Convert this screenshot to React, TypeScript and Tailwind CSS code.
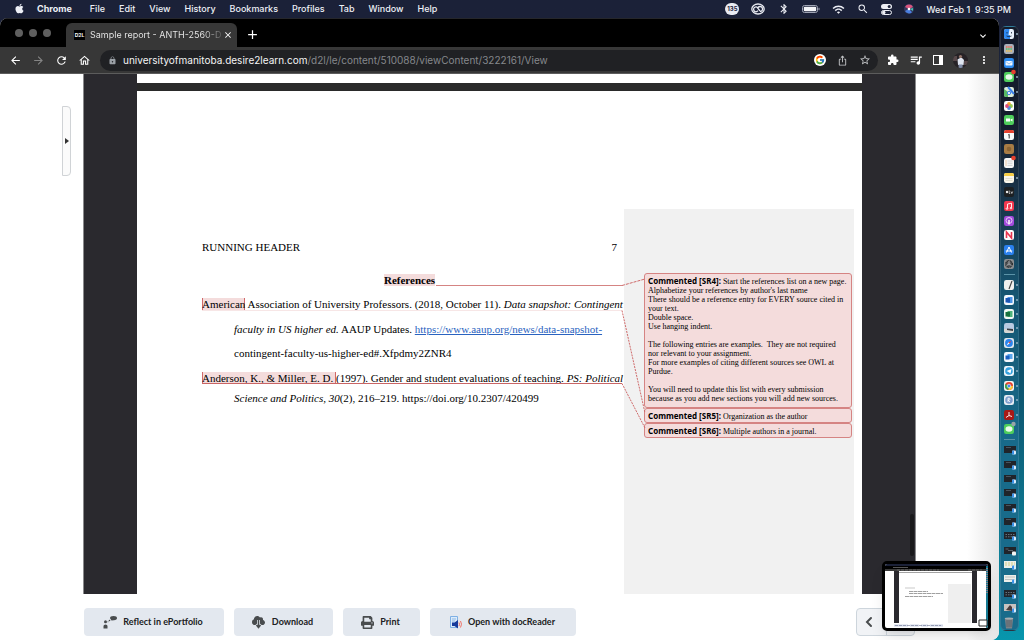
import type { ReactNode } from 'react'
import clsx from 'clsx'
import { FaApple, FaCloud, FaPrint } from 'react-icons/fa'
import { FcGoogle } from 'react-icons/fc'
import {
  MdAdd,
  MdArrowBack,
  MdArrowForward,
  MdBluetooth,
  MdClose,
  MdExpandMore,
  MdExtension,
  MdIosShare,
  MdLock,
  MdMoreVert,
  MdOutlineHome,
  MdQueueMusic,
  MdRefresh,
  MdSearch,
  MdStarBorder,
  MdWifi,
} from 'react-icons/md'

const MENUS = ['File', 'Edit', 'View', 'History', 'Bookmarks', 'Profiles', 'Tab', 'Window', 'Help']

function CreativeCloud() {
  return (
    <svg viewBox="0 0 14 12" className="w-[14px] h-3" fill="none" stroke="#e9ebf2" strokeWidth="1.3">
      <ellipse cx="7" cy="6" rx="6.2" ry="5" />
      <path d="M7 7.8 5.6 8.7A2.4 2.4 0 1 1 6 4.2L9 8M7 4.6A2.5 2.5 0 1 1 9 8.5" />
    </svg>
  )
}

function MenuBar() {
  return (
    <header className="h-[18px] shrink-0 flex items-center justify-between pl-[14px] pr-[13px] text-[9px] leading-none font-medium text-[#eef0f6]">
      <nav className="flex items-center gap-[14px] pb-px">
        <button aria-label="Apple menu" className="mr-[-2px]">
          <FaApple className="w-[11px] h-[11px]" />
        </button>
        <button className="font-bold mr-1">Chrome</button>
        {MENUS.map((m) => (
          <button key={m}>{m}</button>
        ))}
      </nav>
      <div className="flex items-center">
        <span className="relative w-[14px] h-3 rounded-full bg-[#e9ebf2] text-[#1b2138] text-[6px] font-bold flex items-center justify-center mr-3">
          135
        </span>
        <CreativeCloud />
        <MdBluetooth className="w-3 h-3 ml-[13px]" />
        <svg viewBox="0 0 18 8" className="w-[18px] h-2 ml-3" fill="none">
          <rect x=".5" y=".5" width="15" height="7" rx="2" stroke="#a0a5b5" />
          <rect x="1.8" y="1.8" width="12.4" height="4.4" rx="1" fill="#f4f5f8" />
          <path d="M17 2.8v2.4" stroke="#a0a5b5" />
        </svg>
        <MdWifi className="w-[13px] h-[13px] ml-3" />
        <MdSearch className="w-3 h-3 ml-3" />
        <svg viewBox="0 0 11 11" className="w-[11px] h-[11px] ml-3">
          <rect width="11" height="5" rx="2.5" fill="#eef0f6" />
          <circle cx="8.2" cy="2.5" r="1.5" fill="#1b2138" />
          <rect x=".5" y="6.5" width="10" height="4" rx="2" fill="none" stroke="#eef0f6" />
          <circle cx="2.8" cy="8.5" r="1.7" fill="#eef0f6" />
        </svg>
        <svg viewBox="0 0 10 10" className="w-[10px] h-[10px] ml-3">
          <circle cx="5" cy="5" r="5" fill="#33395e" />
          <path d="M1 3a4.5 4.5 0 0 1 8 0L5 5z" fill="#d9557e" />
          <path d="M1 7a4.5 4.5 0 0 0 7 1.2L5 5z" fill="#4a7fe0" />
          <path d="M6 5l3-1v3z" fill="#45c4b0" />
          <circle cx="5" cy="5" r="1.3" fill="#fff" />
        </svg>
        <span className="ml-3 whitespace-pre">Wed Feb 1  9:35 PM</span>
      </div>
    </header>
  )
}

function TabStrip() {
  return (
    <div className="h-[29px] shrink-0 bg-black border-t border-[#26272b] flex items-end pl-[15px] pr-[10px]">
      <div className="flex gap-[6px] self-center">
        <span className="w-2 h-2 rounded-full bg-[#5f5f5f]" />
        <span className="w-2 h-2 rounded-full bg-[#5f5f5f]" />
        <span className="w-2 h-2 rounded-full bg-[#5f5f5f]" />
      </div>
      <div className="ml-[15px] w-[171px] h-6 rounded-t-md bg-[#373737] flex items-center pl-2 pr-1">
        <span className="w-[11px] h-[10px] bg-black text-white text-[5px] font-bold leading-[10px] text-center">D2L</span>
        <span className="ml-[5px] flex-1 whitespace-nowrap text-[9px] bg-linear-to-r from-[#f0f0f0] from-85% to-[#505050] bg-clip-text text-transparent">
          Sample report - ANTH-2560-D
        </span>
        <button aria-label="Close tab" className="text-white">
          <MdClose className="w-[10px] h-[10px]" />
        </button>
      </div>
      <button aria-label="New tab" className="ml-2 mb-[5px] text-white">
        <MdAdd className="w-[15px] h-[15px]" />
      </button>
      <button aria-label="Search tabs" className="ml-auto mb-[5px] text-white">
        <MdExpandMore className="w-3 h-3" />
      </button>
    </div>
  )
}

function Toolbar() {
  return (
    <div className="h-[27px] shrink-0 bg-[#373737] border-b border-[#5c5c5c] flex items-center pl-[9px] pr-[9px] text-white">
      <div className="flex items-center gap-[10px]">
        <button aria-label="Back"><MdArrowBack className="w-[13px] h-[13px]" /></button>
        <button aria-label="Forward" className="text-[#858585]"><MdArrowForward className="w-[13px] h-[13px]" /></button>
        <button aria-label="Reload"><MdRefresh className="w-[13px] h-[13px]" /></button>
        <button aria-label="Home"><MdOutlineHome className="w-[13px] h-[13px]" /></button>
      </div>
      <div className="ml-[9px] flex-1 h-[21px] rounded-full bg-[#202124] flex items-center pl-2 pr-[7px]">
        <MdLock className="w-[9px] h-[9px] text-[#9aa0a6]" />
        <span className="ml-[6px] text-[10px] text-[#85888c]">
          <span className="text-[#f4f4f4]">universityofmanitoba.desire2learn.com</span>/d2l/le/content/510088/viewContent/3222161/View
        </span>
        <div className="ml-auto flex items-center gap-[11px] text-[#c4c6c9]">
          <span className="w-3 h-3 rounded-full bg-white flex items-center justify-center">
            <FcGoogle className="w-[10px] h-[10px]" />
          </span>
          <button aria-label="Share"><MdIosShare className="w-[11px] h-[11px]" /></button>
          <button aria-label="Bookmark"><MdStarBorder className="w-3 h-3" /></button>
        </div>
      </div>
      <div className="ml-[9px] flex items-center gap-[10px]">
        <button aria-label="Extensions"><MdExtension className="w-3 h-3" /></button>
        <button aria-label="Media"><MdQueueMusic className="w-[14px] h-[14px]" /></button>
        <button aria-label="Side panel" className="w-[10px] h-[10px] border border-white border-r-4" />
        <button aria-label="Profile" className="w-[15px] h-[15px] rounded-full overflow-hidden">
          <svg viewBox="0 0 15 15">
            <rect width="15" height="15" fill="#262226" />
            <path d="M0 3h4v5H0zM11 8h4v4h-4z" fill="#57484a" />
            <circle cx="7.5" cy="3.6" r="1.6" fill="#94766b" />
            <path d="M4.5 6.5 7 5h2l2 2-.5 5H5z" fill="#dfe5f0" />
            <path d="M5.6 11.5h4V15h-4z" fill="#7f8ba6" />
          </svg>
        </button>
        <button aria-label="Chrome menu"><MdMoreVert className="w-3 h-3" /></button>
      </div>
    </div>
  )
}

function Mark({ children }: { children: ReactNode }) {
  return (
    <mark className="bg-[#f4dcdc] text-black shadow-[inset_1px_0_#d0696a,inset_-1px_0_#d0696a]">{children}</mark>
  )
}

// Lines that tie each highlighted passage to its balloon in the margin
function Connectors() {
  return (
    <svg className="absolute left-0 top-0 w-[520px] h-[360px] pointer-events-none" viewBox="0 0 520 360" fill="none">
      <path d="M299 194.500H485" stroke="#d58483" />
      <path d="M485 194.500 508 188" stroke="#cf6a6a" strokeDasharray="3 1" />
      <path d="M65 219.500H485" stroke="#f7e6e6" />
      <path d="M485 219.500 508 322" stroke="#cf6a6a" strokeDasharray="2 1" />
      <path d="M65 292.500H485" stroke="#c96565" />
      <path d="M485 292.500 508 337" stroke="#cf6a6a" strokeDasharray="2 1" />
    </svg>
  )
}

function Comment({ tag, children }: { tag: string; children: ReactNode }) {
  return (
    <section className="bg-[#f4dcdc] border border-[#d58483] rounded-[3px] pl-[3px] pt-[2px] pb-px first:pb-1 leading-[9px] whitespace-pre">
      <b className="inline-block leading-[10px] font-['Noto_Sans','Open_Sans',sans-serif]">Commented [{tag}]:</b> {children}
    </section>
  )
}

const SR4_TEXT = `Start the references list on a new page.
Alphabetize your references by author's last name
There should be a reference entry for EVERY source cited in
your text.
Double space.
Use hanging indent.

The following entries are examples.  They are not required
nor relevant to your assignment.
For more examples of citing different sources see OWL at
Purdue.

You will need to update this list with every submission
because as you add new sections you will add new sources.`

function PaperPage() {
  return (
    <article className="relative flex-1 bg-white flex pr-2 text-black font-['Liberation_Serif','Times_New_Roman',serif]">
      <div className="flex-1 pt-[150px] pl-[65px] text-[11px] whitespace-nowrap">
        <div className="flex justify-between pr-[7px] leading-3">
          <span>RUNNING HEADER</span>
          <span>7</span>
        </div>
        <h1 className="mt-[15px] pr-[7px] leading-6 font-bold text-center">
          <mark className="bg-[#f4dcdc] text-black">References</mark>
        </h1>
        <p className="leading-6">
          <Mark>American</Mark> Association of University Professors. (2018, October 11). <i>Data snapshot: Contingent</i>
        </p>
        <p className="mt-px pl-8 leading-6">
          <i>faculty in US higher ed.</i> AAUP Updates.{' '}
          <a href="#aaup" className="text-[#2a63c0] underline">https://www.aaup.org/news/data-snapshot-</a>
          <br />
          contingent-faculty-us-higher-ed#.Xfpdmy2ZNR4
        </p>
        <p className="mt-px leading-6">
          <Mark>Anderson, K., &amp; Miller, E. D. </Mark>(1997). Gender and student evaluations of teaching. <i>PS: Political</i>
        </p>
        <p className="pl-8 leading-4">
          <i>Science and Politics, 30</i>(2), 216–219. https://doi.org/10.2307/420499
        </p>
      </div>
      <aside className="mt-[118px] w-[230px] shrink-0 bg-[#f1f1f1] pt-16 pl-5 pr-[2px] flex flex-col text-[8px]">
        <Comment tag="SR4">{SR4_TEXT}</Comment>
        <Comment tag="SR5">Organization as the author</Comment>
        <Comment tag="SR6">Multiple authors in a journal.</Comment>
      </aside>
      <Connectors />
    </article>
  )
}

function ReflectIcon() {
  return (
    <svg viewBox="0 0 14 14" className="w-[14px] h-[14px]" fill="#494c4e">
      <circle cx="2.5" cy="6.8" r="1.5" />
      <path d="M.5 11q0-1.500 2-1.500t2 1.500v2.500h-4zM7 3.200Q7 1 10.500 1T14 3t-3 2.200L8.500 5.500z" />
      <circle cx="6.500" cy="5.500" r=".8" />
      <circle cx="5" cy="6.800" r=".5" />
    </svg>
  )
}

function DownloadIcon() {
  return (
    <span className="relative w-[14px] h-[14px] text-[#494c4e]">
      <FaCloud className="w-[13px] h-[11px]" />
      <svg viewBox="0 0 14 14" className="absolute inset-0" fill="none">
        <path d="M6.500 5v7M4 9.500l2.500 3 2.500-3" stroke="#e3e8ef" strokeWidth="3" />
        <path d="M6.500 5v7M4.500 10l2 2.500 2-2.500" stroke="#494c4e" strokeWidth="1.500" />
      </svg>
    </span>
  )
}

function DocReaderIcon() {
  return (
    <svg viewBox="0 0 13 13" className="w-[13px] h-[13px]" fill="none">
      <path d="M1.500.500h7v11h-7z" fill="#dcecfb" stroke="#7fb0e4" />
      <path d="M3 3h4M3 5h3" stroke="#8fb7e3" />
      <path d="M3 6.500h2.500L9 4v8.500L5.500 10H3z" fill="#173b9c" />
      <path d="M10 6.500q1 1.800 0 3.600M11.500 5q2 3.200 0 6.500" stroke="#ef7066" />
    </svg>
  )
}

function ActionButton({ icon, label, className }: { icon: ReactNode; label: string; className: string }) {
  return (
    <button className={clsx('h-7 rounded bg-[#e3e8ef] flex items-center justify-center gap-[6px] pr-[2px] text-[9px] font-bold text-[#202122]', className)}>
      {icon}
      {label}
    </button>
  )
}

function ActionBar() {
  return (
    <footer className="h-[46px] shrink-0 flex items-start pt-[14px] mx-[84px] font-['Lato',sans-serif]">
      <div className="flex gap-[10px]">
        <ActionButton className="w-[140px]" icon={<ReflectIcon />} label="Reflect in ePortfolio" />
        <ActionButton className="w-[99px]" icon={<DownloadIcon />} label="Download" />
        <ActionButton className="w-[77px]" icon={<FaPrint className="w-[13px] h-[13px] text-[#494c4e]" />} label="Print" />
        <ActionButton className="w-[146px]" icon={<DocReaderIcon />} label="Open with docReader" />
      </div>
      <div className="ml-auto w-[59px] h-7 rounded border border-[#cdd5dc] bg-[#f1f3f6] flex">
        <button aria-label="Previous" className="w-[30px] border-r border-[#cdd5dc] flex items-center pl-2">
          <svg viewBox="0 0 8 12" className="w-2 h-3" fill="none" stroke="#494c4e" strokeWidth="2" strokeLinecap="round">
            <path d="M6 2 2 6l4 4" />
          </svg>
        </button>
      </div>
    </footer>
  )
}

function ScreenshotPreview() {
  return (
    <div className="absolute right-[8px] bottom-[9px] w-[109px] h-[70px] rounded-[5px] border-3 border-black bg-white overflow-hidden shadow-lg">
      <svg viewBox="0 0 103 64" className="w-full h-full">
        <path d="M0 0h103v2H0z" fill="#1b2138" />
        <path d="M0 2h101v3H0z" fill="#000" />
        <path d="M0 5h101v2H0z" fill="#3a3a3a" />
        <path d="M8 3.500h15" stroke="#555" />
        <path d="M12 6h42M83 6h14" stroke="#777" strokeDasharray="3 1" strokeWidth=".7" />
        <path d="M9 7h5v52H9zM87 7h5v52h-5z" fill="#2a292e" />
        <path d="M14 8.500h73" stroke="#8b8b8b" strokeWidth=".8" />
        <path d="M63 20h23v39H63z" fill="#efefef" />
        <path d="M20 24h10" stroke="#bbb" strokeWidth=".8" />
        <path d="M24 27.500h19M24 29.500h34M20 32.500h28" stroke="#888" strokeDasharray="4 .5" strokeWidth=".8" />
        <path d="M9 61.500h14M25 61.500h9M36 61.500h7M45 61.500h13" stroke="#cfd6e6" strokeWidth="2" />
        <path d="M10 61.500h46" stroke="#6d7590" strokeDasharray="3 1" strokeWidth=".6" />
        <path d="M101 2h2v62h-2z" fill="#167a93" />
        <path d="M102 4v26" stroke="#e88" strokeDasharray="1 1" />
        <path d="M94 56h8v6h-8z" fill="#fff" stroke="#222" />
      </svg>
    </div>
  )
}

function Dot({ on }: { on?: boolean }) {
  return on ? <circle cx="13" cy="5" r=".9" fill="#9fb8cc" /> : null
}

interface AppIcon {
  bg: string
  art: ReactNode
  running?: boolean
}

const red = '#e5402e'

const APPS: AppIcon[] = [
  { bg: '#e8f1fb', running: true, art: <><path d="M0 2Q0 0 2 0H5.500L4.500 6H6v4H2Q0 10 0 8z" fill="#2f8af0" /><path d="M3 3v1.500M7.500 3v1.500M2.500 7q2.500 1.500 5 0" stroke="#123" strokeWidth=".8" fill="none" /></> },
  { bg: '#aab0ba', art: <><path d="M2 3h6" stroke="#f2704d" strokeDasharray="1.500 .7" strokeWidth="1.500" /><path d="M2 5h6" stroke="#55c46a" strokeDasharray="1.500 .7" strokeWidth="1.500" /><path d="M2 7h6" stroke="#f0c04d" strokeDasharray="1.500 .7" strokeWidth="1.500" /></> },
  { bg: '#2d8cf0', art: <><rect x="1.500" y="3" width="7" height="4.500" rx=".8" fill="#eef6ff" /><path d="M1.500 3.300 5 6l3.500-2.700" stroke="#77aee8" fill="none" strokeWidth=".7" /></> },
  { bg: '#4fce5c', running: true, art: <><ellipse cx="5" cy="5" rx="3.500" ry="2.700" fill="#eafbea" /><circle cx="9.500" cy="0" r="2.300" fill={red} /></> },
  { bg: '#dcecd9', running: true, art: <><path d="M0 2l4 3v5H2Q0 10 0 8z" fill="#58b964" /><path d="M4 0l6 7" stroke="#3d82ea" strokeWidth="2" /><circle cx="5" cy="6" r="1.600" fill="#fff" stroke="#3d82ea" /></> },
  { bg: '#ffffff', art: <><circle cx="5" cy="3" r="1.900" fill="#f5a335" /><circle cx="7" cy="5" r="1.900" fill="#9ac94e" /><circle cx="5" cy="7" r="1.900" fill="#4f8ee0" /><circle cx="3" cy="5" r="1.900" fill="#dd4f7c" /></> },
  { bg: '#4fce5c', art: <path d="M2 3.500h4v3H2zM6.500 4.500 8.500 3.500v3l-2-1z" fill="#fff" /> },
  { bg: '#fafafa', art: <><path d="M0 2Q0 0 2 0h6q2 0 2 2v1H0z" fill={red} /><path d="M4.200 5 5.200 4.300V8.500" stroke="#333" fill="none" /></> },
  { bg: '#a87c45', art: <circle cx="5" cy="5" r="2.300" fill="#8c6433" /> },
  { bg: '#f7f7f7', art: <><path d="M3.500 3h5M3.500 5.200h5M3.500 7.400h5" stroke="#c3c3c3" strokeWidth=".7" /><path d="M2 2.500v6" stroke="#e09a5a" strokeDasharray="1 1" /><circle cx="9.500" cy="0" r="2.300" fill={red} /></> },
  { bg: '#fbf8ec', running: true, art: <><path d="M0 2Q0 0 2 0h6q2 0 2 2v1H0z" fill="#f7ce46" /><path d="M1.500 5.500h7M1.500 7.500h7" stroke="#d7d3c2" strokeWidth=".6" /></> },
  { bg: '#1d2022', art: <><circle cx="3" cy="5" r="1.200" fill="#eee" /><path d="M5.200 3.500v3h1M7 4.500l.8 2 .9-2" stroke="#eee" fill="none" strokeWidth=".7" /></> },
  { bg: '#f4384f', art: <path d="M3.500 7V3l4-.8V6.500M3.500 7a.8.8 0 1 1-1 0zM7.500 6.500a.8.8 0 1 1-1 0z" stroke="#fff" fill="none" strokeWidth=".9" /> },
  { bg: '#a24bdc', art: <><circle cx="5" cy="4.500" r="3" fill="none" stroke="#fff" strokeWidth=".7" /><path d="M5 4v4.500" stroke="#fff" strokeWidth="1.500" /></> },
  { bg: '#fdfdfd', art: <path d="M2.500 8V2l5 6V2" stroke="#e83550" fill="none" strokeWidth="1.600" /> },
  { bg: '#2a80ee', art: <path d="M5 2 2.500 7.500M5 2l2.500 5.500M1.800 6h6.400" stroke="#fff" fill="none" strokeWidth="1" /> },
  { bg: '#8b8e91', art: <><circle cx="5" cy="5" r="3.300" fill="#55585b" stroke="#25282a" strokeDasharray="1 .6" strokeWidth="1.300" /><path d="M5 5V2M5 5l2.600 1.500M5 5 2.400 6.500" stroke="#b5b8bb" strokeWidth=".8" /></> },
]

const OPEN_APPS: AppIcon[] = [
  { bg: '#f0f0ee', running: true, art: <path d="M8 1 5 9" stroke="#444" strokeWidth="1.200" /> },
  { bg: '#f3f7fc', running: true, art: <><rect x="3.500" y="2" width="5" height="6" fill="#4b94e6" /><rect x="1.500" y="3" width="4.500" height="4.500" fill="#1a56b4" /></> },
  { bg: '#f3faf5', running: true, art: <><rect x="3.500" y="2" width="5" height="6" fill="#4db37a" /><rect x="1.500" y="3" width="4.500" height="4.500" fill="#18713e" /></> },
  { bg: '#b9cbe2', running: true, art: <><path d="M0 6h10v2q0 2-2 2H2Q0 10 0 8z" fill="#d8d8d4" /><path d="M3 5.500 9 6v2L3 7z" fill="#3a3f47" /></> },
  { bg: '#dfe6ec', running: true, art: <><circle cx="5" cy="5" r="3.900" fill="#2b85ee" /><path d="M7.500 2.500 5.600 5.600 4.400 4.400z" fill="#f04438" /><path d="M2.500 7.500 4.400 4.400 5.600 5.600z" fill="#fff" /></> },
  { bg: '#f3f7fc', running: true, art: <><rect x="3.500" y="2" width="5" height="5" fill="#59a5ec" /><rect x="1.500" y="3.500" width="4" height="4" fill="#1a5fc0" /></> },
  { bg: '#ecf4fa', running: true, art: <><circle cx="5" cy="5" r="3.800" fill="#34a1df" /><path d="M2.500 5l5-2-1 4.500-2-1.500z" fill="#fff" /></> },
  { bg: '#f4f4f2', running: true, art: <><circle cx="5" cy="5" r="4" fill="#e5432f" /><path d="M5 5 1.500 3A4 4 0 0 0 4.500 9z" fill="#33a852" /><path d="M5 5h4a4 4 0 0 1-4.500 4z" fill="#fcc934" /><circle cx="5" cy="5" r="1.800" fill="#4285f4" stroke="#fff" strokeWidth=".6" /></> },
  { bg: '#e8edf3', running: true, art: <><circle cx="5" cy="5" r="3.800" fill="#7f9fcf" /><path d="M4 7V3.300h1.500q1 .9 0 1.700H4l2 2" stroke="#fff" strokeWidth=".8" fill="none" /></> },
  { bg: '#a91916', running: true, art: <path d="M5 2v3.500L2 7.500M5 5.500l3 1" stroke="#fff" strokeWidth=".9" fill="none" /> },
  { bg: '#4fce5c', art: <><ellipse cx="5" cy="5" rx="3.500" ry="2.700" fill="#eafbea" /><circle cx="9.500" cy="0" r="2.200" fill="#97a5a9" /></> },
]

const MINIMISED = ['dark', 'dark', 'dark', 'dark', 'dark', 'dark', 'grid', 'term', 'sheet', 'page', 'grid', 'photo'] as const

function MinimisedWindow({ kind }: { kind: (typeof MINIMISED)[number] }) {
  const light = kind === 'sheet' || kind === 'page'
  return (
    <svg viewBox="0 0 14 10" className="w-[14px] h-[10px]">
      <rect y="1" width="12" height="7" fill={light ? '#eceeea' : kind === 'photo' ? '#c8c2c0' : '#20242a'} />
      {kind === 'dark' && <path d="M2 2.500h5" stroke="#5c6874" strokeWidth=".7" />}
      {kind === 'grid' && <path d="M1.500 3.500h9M1.500 5.800h9" stroke="#68727c" strokeDasharray="1.500 1" />}
      {kind === 'term' && <path d="M1.500 3h3M4 4.500h5" stroke="#77818a" strokeWidth=".7" />}
      {kind === 'sheet' && <path d="M1 3h10M1 5h10" stroke="#cfc66a" strokeDasharray="2 1" strokeWidth=".8" />}
      {kind === 'page' && <path d="M1 3h10M1 5.500h10" stroke="#a6aaae" strokeWidth=".7" />}
      {kind === 'photo' && <path d="M2 7l4-5 2 2v4z" fill="#4a3c3c" />}
      <rect x="8" y="5.500" width="4" height="4" rx="1" fill={kind === 'term' ? '#f5f5f5' : '#d8ebfb'} />
      {kind !== 'term' && <path d="M8 6.500q0-1 1-1h1v4H9q-1 0-1-1z" fill="#3b92ea" />}
    </svg>
  )
}

function DockApp({ app }: { app: AppIcon }) {
  return (
    <li className="flex-1 flex items-center">
      <svg viewBox="0 0 14 10" className="w-[14px] h-[10px] overflow-visible">
        <rect width="10" height="10" rx="2.200" fill={app.bg} />
        {app.art}
        <Dot on={app.running} />
      </svg>
    </li>
  )
}

function Dock() {
  return (
    <ul className="mt-2 mb-[9px] ml-px w-[19px] rounded-md border border-white/10 bg-linear-to-b from-[#141c2c] from-15% via-[#155672] via-45% to-[#186b8b] to-70% pl-[3px] flex flex-col">
      {APPS.map((app, i) => (
        <DockApp key={i} app={app} />
      ))}
      <li className="my-[3px] h-px mr-[3px] bg-[#5b93a8]" />
      {OPEN_APPS.map((app, i) => (
        <DockApp key={i} app={app} />
      ))}
      <li className="my-[3px] h-px mr-[3px] bg-[#5b93a8]" />
      {MINIMISED.map((kind, i) => (
        <li key={i} className="flex-1 flex items-center">
          <MinimisedWindow kind={kind} />
        </li>
      ))}
      <li className="flex-1 flex items-center">
        <svg viewBox="0 0 10 12" className="w-[10px] h-3">
          <path d="M.8 1h8.400L8 11.500H2z" fill="#798188" />
          <path d="M3 3v7M5 3v7M7 3v7" stroke="#555e66" strokeWidth=".8" />
          <ellipse cx="5" cy="1.500" rx="4.200" ry="1" fill="#a6adb2" />
        </svg>
      </li>
    </ul>
  )
}

export default function App() {
  return (
    <div className="h-screen flex flex-col overflow-hidden font-['Inter',sans-serif] bg-linear-to-b from-[#1b2138] from-5% via-[#0c3550] via-40% to-[#0796ad]">
      <MenuBar />
      <div className="flex-1 min-h-0 flex">
        <div className="relative flex-1 flex flex-col rounded-lg rounded-bl-none overflow-hidden bg-white">
          <TabStrip />
          <Toolbar />
          <main className="flex-1 min-h-0 flex flex-col bg-linear-to-l from-[#e6e6e6] to-white to-[32px]">
            <div className="flex-1 min-h-0 flex">
              <div className="w-[83px] pt-8 flex justify-end pr-3">
                <button
                  aria-label="Expand side panel"
                  className="w-[9px] h-[70px] rounded-r border border-[#d0d3d6] bg-[#fbfbfb] flex items-center justify-center"
                >
                  <svg viewBox="0 0 4 6" className="w-1 h-[6px]"><path d="M0 0l4 3-4 3z" fill="#333" /></svg>
                </button>
              </div>
              <div className="relative flex-1 flex flex-col bg-[#2a292e] border-x border-[#8a8a8c] px-[53px]">
                <div className="h-[9px] bg-white" />
                <div className="h-2 bg-[#2a2a2a]" />
                <PaperPage />
                <div className="absolute right-px bottom-[38px] w-1 h-[42px] rounded-full bg-[#19191b]" />
              </div>
              <div className="w-[83px]" />
            </div>
            <ActionBar />
          </main>
          <ScreenshotPreview />
        </div>
        <aside className="w-[25px] flex">
          <Dock />
        </aside>
      </div>
    </div>
  )
}
